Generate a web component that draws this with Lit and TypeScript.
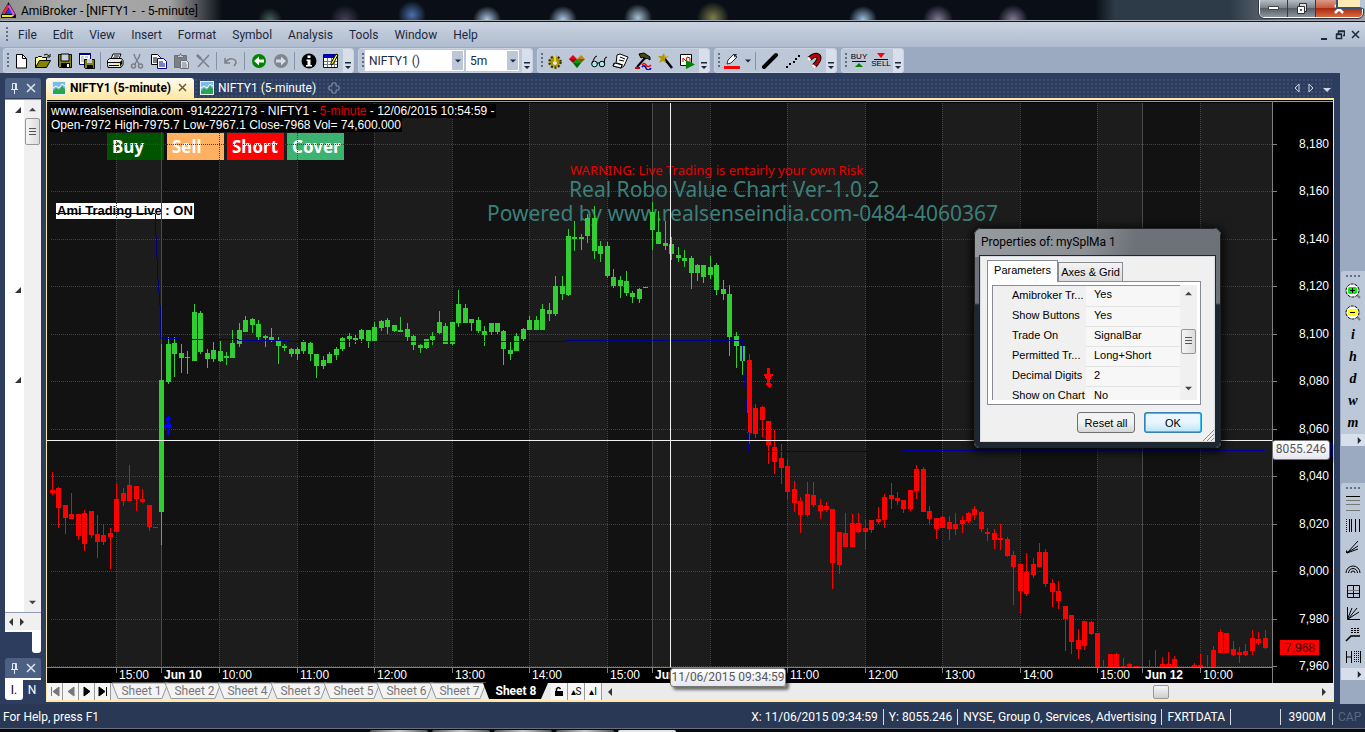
import { LitElement, html, svg, css } from "lit";
import { customElement } from "lit/decorators.js";

type Bar = [number, number, number, number];

/* Each bar: wick top, body top, body bottom, wick bottom. */
const BARS: Bar[] = [
  [472,490,493,495],[487,488,508,528],[505,505,518,534],[493,514,519,519],[514,514,536,540],[510,513,544,551],[511,511,535,538],
  [515,534,542,558],[524,535,542,545],[528,533,537,569],[483,499,532,532],[488,493,501,506],[465,485,501,501],[486,486,499,511],
  [489,499,502,503],[505,505,527,531],[527,527,528,528],[344,380,512,545],[337,344,382,384],[337,343,354,377],[344,353,358,373],
  [351,357,358,374],[304,312,361,361],[311,313,352,354],[349,353,359,368],[342,350,359,362],[341,351,361,362],[352,356,358,365],
  [330,343,358,358],[323,330,344,347],[316,320,332,332],[318,319,325,333],[320,324,337,340],[335,336,338,347],[328,337,340,342],
  [337,341,346,364],[344,346,348,351],[348,349,354,357],[347,349,354,360],[340,342,351,354],[342,343,354,361],[354,354,366,378],
  [356,360,366,369],[352,354,363,363],[347,349,355,360],[337,338,349,351],[333,336,339,347],[335,338,340,344],[329,330,339,343],
  [330,330,341,348],[322,327,341,341],[320,321,328,331],[318,320,327,334],[325,325,331,332],[317,330,332,332],[323,329,337,341],
  [335,336,345,350],[344,345,348,353],[339,339,348,349],[332,336,340,345],[311,322,333,334],[323,326,344,344],[322,322,344,345],
  [290,304,323,327],[304,308,323,323],[319,319,323,331],[317,320,331,333],[326,331,335,346],[323,323,332,335],[323,323,332,334],
  [330,331,349,365],[342,350,354,360],[333,336,351,351],[328,329,339,341],[316,320,330,330],[316,320,330,330],[304,309,330,330],
  [303,310,314,321],[276,286,314,316],[276,286,294,300],[229,236,295,296],[221,237,239,251],[234,237,239,250],[214,218,236,243],
  [206,218,251,259],[241,246,254,262],[242,246,276,278],[269,277,286,288],[276,280,286,298],[271,281,293,296],[291,293,297,303],
  [288,289,299,303],[287,287,288,288],[202,212,230,250],[211,232,244,244],[221,243,246,250],[237,244,254,260],[247,255,258,262],
  [250,258,261,267],[256,258,273,289],[264,265,273,281],[265,265,277,283],[256,267,275,279],[263,265,290,295],[280,289,294,300],
  [285,294,337,356],[332,336,346,368],[346,346,361,375],[354,360,433,444],[404,408,434,438],[406,407,420,437],[421,421,445,464],
  [430,447,462,474],[444,458,468,484],[459,466,492,500],[481,489,503,512],[497,501,515,533],[482,494,515,517],[482,495,505,507],
  [499,505,511,519],[502,506,510,512],[509,509,563,589],[532,532,565,574],[513,533,547,547],[514,523,547,547],[513,523,532,533],
  [520,528,532,550],[520,520,530,533],[507,519,522,524],[494,497,520,528],[483,495,499,509],[492,498,501,505],[500,500,509,513],
  [490,490,509,511],[465,469,491,499],[467,469,512,512],[506,511,519,524],[518,518,529,539],[516,517,528,528],[516,522,529,540],
  [513,524,529,535],[516,520,524,533],[512,513,521,523],[506,509,515,520],[511,512,529,532],[528,532,534,541],[529,533,540,549],
  [524,538,540,550],[537,539,556,557],[551,555,567,605],[564,564,591,614],[553,572,594,596],[558,564,575,578],[543,552,567,567],
  [549,552,584,587],[579,583,592,607],[581,591,601,609],[606,606,619,651],[615,615,642,654],[629,640,649,659],[621,621,646,650],
  [621,622,634,635],[633,633,667,667],[660,667,667,667],[654,654,667,667],[653,654,667,667],[658,666,667,667],[663,664,667,667],
  [666,666,667,667],[667,667,667,667],[660,667,667,667],[650,667,667,667],[657,664,667,667],[652,664,667,667],[656,659,667,667],
  [667,667,667,667],[667,667,667,667],[663,665,667,667],[654,665,667,667],[655,667,667,667],[646,650,667,667],[629,632,653,653],
  [633,633,653,653],[641,649,655,656],[647,652,655,663],[644,651,655,656],[630,638,651,655],[632,639,643,645],[630,638,648,649],
];
const FIRST_X = 52.3;
const STEP = 6.452;
const GREEN_FROM = 17;
const GREEN_TO = 107;

const PRICES: [string, number][] = [
  ["8,180",144],["8,160",191],["8,140",239],["8,120",286],["8,100",334],["8,080",381],
  ["8,060",429],["8,040",476],["8,020",524],["8,000",571],["7,980",619],["7,960",666],
];
const TIMES: [string, number, boolean][] = [
  ["15:00",116,false],["Jun 10",161,true],["10:00",219,false],["11:00",297,false],["12:00",374,false],["13:00",452,false],
  ["14:00",529,false],["15:00",607,false],["Jun 11",652,true],["10:00",710,false],["11:00",787,false],["12:00",865,false],
  ["13:00",942,false],["14:00",1020,false],["15:00",1097,false],["Jun 12",1142,true],["10:00",1200,false],
];

const icon = (body: unknown, cls = "ic") =>
  html`<svg class=${cls} viewBox="0 0 18 18" aria-hidden="true">${body}</svg>`;

const I = {
  page: svg`<path d="M4.500 2.500h6l4 4v9.500h-10z" fill="#fff" stroke="#000"/><path d="M10.500 2.500v4h4" fill="none" stroke="#000"/>`,
  open: svg`<path d="M1.500 15.500V5.500h2l1-1h3l1 1h4v3" fill="#ffff9c" stroke="#000"/><path d="M1.500 15.500l4-7h11l-4 7z" fill="#848400" stroke="#000"/><path d="M10 3q3-2 5 1m1-2v3h-3" fill="none" stroke="#000"/>`,
  save: svg`<path d="M2.500 2.500h13v13h-12l-1-1z" fill="#848400" stroke="#000"/><path d="M5 2h8v7H5z" fill="#c6cedd" stroke="#000"/><path d="M5 11h9v5H5z"/><path d="M11 12h2v3h-2z" fill="#fff"/>`,
  saveAll: svg`<path d="M1.500 1.500h11v11h-11z" fill="#fff" stroke="#000084"/><path d="M1 1h12v2H1z" fill="#000084"/><path d="M3 5h3m1 0h3M3 7h3m-3 2h3" stroke="#8c9ab0"/><path d="M6.500 7.500h10v9h-9l-1-1z" fill="#848400" stroke="#000"/><path d="M9 7h5v4H9z" fill="#c6cedd"/><path d="M9 13h6v4H9z"/>`,
  print: svg`<path d="M5 7l2-5h8l-2 5" fill="#fff" stroke="#000"/><path d="M8 4h5m-6 2h5" stroke="#000"/><path d="M1.500 8.500l2-2h12l1.500 2v4l-2 3h-13l-.5-3z" fill="#e8e8e8" stroke="#000"/><path d="M2 10.500h12M3 13.500h10" stroke="#000"/><path d="M14 10l2-2v4l-2 3z"/><path d="M10 12h3" stroke="#ff0"/>`,
  cut: svg`<path d="M6 2l1 3 4 7M12 2l-1 3-4 7" fill="none" stroke="#7b7f87" stroke-width="1.500"/><circle cx="5.500" cy="14" r="2" fill="none" stroke="#7b7f87" stroke-width="1.500"/><circle cx="12.500" cy="14" r="2" fill="none" stroke="#7b7f87" stroke-width="1.500"/>`,
  copy: svg`<path d="M1.500 2.500h6l3 3v7h-9z" fill="#fff" stroke="#000"/><path d="M3 6h4M3 8h5m-5 2h5" stroke="#000"/><path d="M7.500 6.500h6l3 3v7h-9z" fill="#fff" stroke="#000084"/><path d="M9 10h4m-4 2h6m-6 2h6" stroke="#000084"/>`,
  paste: svg`<path d="M2.500 3.500h12v12h-12z" fill="#7b7f87" stroke="#6c7078"/><path d="M5.500 5.500v-2h2l1-2 1 2h2v2z" fill="#c6cedd" stroke="#6c7078"/><path d="M8.500 8.500h6l2 2v6h-8z" fill="#dfe4ee" stroke="#6c7078"/><path d="M10 11h4m-4 2h5m-5 2h5" stroke="#7b7f87"/>`,
  del: svg`<path d="M3 3l12 12M15 3L4 15" stroke="#7b7f87" stroke-width="1.500"/><path d="M3 3l4 4" stroke="#7b7f87" stroke-width="2.500"/>`,
  undo: svg`<path d="M3 6v5h5M3 11c4-6 11-5 11 0l-2 3" fill="none" stroke="#7b7f87" stroke-width="1.500"/>`,
  back: svg`<circle cx="9" cy="9" r="7" fill="#008400"/><path d="M4 9l5-4.500v3h5v3H9v3z" fill="#fff"/>`,
  fwd: svg`<circle cx="9" cy="9" r="7" fill="#80858e"/><path d="M14 9L9 4.500v3H4v3h5v3z" fill="#d5dce8"/>`,
  info: svg`<circle cx="9" cy="9" r="7.500"/><path d="M7.500 3.500h3v2.500h-3zM6.500 7.500h4V13h1.500v1.500H6V13h1.500V9h-1z" fill="#fff"/>`,
  table: svg`<path d="M1.500 2.500h14v13h-14z" fill="#fff" stroke="#000084"/><path d="M2 3h13v3H2z" fill="#00c"/><path d="M2 9.500h13M2 12.500h13M5.500 6v9m4-9v9m3-9v9" stroke="#777"/><path d="M9 11l5-9 2 1-5 9-2 1z" fill="#ff0" stroke="#000"/>`,
  gear: svg`<circle cx="9" cy="10" r="5.500" fill="#c8b400" stroke="#3a3000" stroke-dasharray="2 1.500" stroke-width="2.500"/><circle cx="9" cy="10" r="4.500" fill="#a89400"/><circle cx="9" cy="11" r="2" fill="#e8e8f0"/><path d="M8 3h2v7H8z" fill="#e8d830"/>`,
  gems: svg`<path d="M1 7l4-4 4 4-4 4z" fill="#e8001c"/><path d="M9 7l4-4 4 4-4 4z" fill="#bd8a10"/><path d="M5 11l4-4 4 4-4 5z" fill="#00a000"/><path d="M1 7h8l-4 4zM9 7h8l-4 4zM5 11h8l-4 5z" opacity=".35"/>`,
  glasses: svg`<circle cx="4.500" cy="12" r="2.800" fill="#a8f0f0" stroke="#000"/><circle cx="12" cy="12" r="2.800" fill="#a8f0f0" stroke="#000"/><path d="M7 11h2M2 11l3-6 2-1m7 7l1-5 2-1" fill="none" stroke="#000"/>`,
  scroll: svg`<path d="M5 3l3-1 8 3-4 9-3 2-8-2 1-3 2 1z" fill="#fff" stroke="#000"/><path d="M8 5l5 2M7 8l5 1M5 11l6 2" stroke="#000"/><path d="M1 14l8 2 1-3-7-2z" fill="#fff" stroke="#000"/>`,
  pick: svg`<path d="M5 2l5-1 6 4v3l-3-2-2 1-2-2-2 1-1-2z" fill="#4a4a10" stroke="#000"/><path d="M11 6L3 15" stroke="#000" stroke-width="2"/><path d="M1 16h5" stroke="#c00" stroke-width="2"/><path d="M8 13q2-3 4 0t5 0" stroke="#e00" fill="none" stroke-width="1.500"/><path d="M8 15q2-3 4 1t5 0" stroke="#00c" fill="none" stroke-width="1.500"/>`,
  wand: svg`<path d="M8 6l8 10" stroke="#000" stroke-width="2.500"/><path d="M2 4l4 0 2-3 1 4 4-1-4 3 1 4-3-2-4 2 2-4z" fill="#b09a00"/>`,
  play: svg`<path d="M2.500 2.500h11v11h-11z" fill="#fff" stroke="#000"/><path d="M5 10V6l3 3 1-4 3 1v4" fill="none" stroke="#d00"/><path d="M8 8l9 4.500L8 17z" fill="#008400"/>`,
  pen: svg`<path d="M4 12l1-4 6-6 3 3-6 6-4 1z" fill="#fff" stroke="#24304a"/><path d="M10 2l4 0-2 4z" fill="#24304a"/><path d="M1 14h16v3H1z" fill="red"/>`,
  line: svg`<path d="M3 15L15 3" stroke="#000" stroke-width="4" stroke-linecap="round"/>`,
  dots: svg`<path d="M3 15h2m1-3h2m2-2h2m0-3h2m1-3h2" stroke="#000" stroke-width="2"/>`,
  magnet: svg`<path d="M4 7l4-3q6-2 6 2 0 3-5 8" fill="none" stroke="#000" stroke-width="5"/><path d="M4 7l4-3q6-2 6 2 0 3-5 8" fill="none" stroke="#c00000" stroke-width="3"/><path d="M3 5.500l2.500 3M7.500 13l3 2.500" stroke="#fff" stroke-width="2"/>`,
};

const R = {
  plus: svg`<circle cx="8.500" cy="8.500" r="6.500" fill="#fff" stroke="#000" stroke-dasharray="3 1"/><rect x="4" y="5" width="9" height="7" rx="2" fill="#0e0"/><path d="M8.500 6v5M6 8.500h5" stroke="#000"/><path d="M13 13l3 3" stroke="#777" stroke-width="2"/>`,
  minus: svg`<circle cx="8.500" cy="8.500" r="6.500" fill="#fff" stroke="#000" stroke-dasharray="3 1"/><rect x="4" y="5" width="9" height="7" rx="2" fill="#ff0"/><path d="M6 8.500h5" stroke="#000"/><path d="M13 13l3 3" stroke="#777" stroke-width="2"/>`,
  hlines: svg`<path d="M2 2.500h14" stroke="#000"/><path d="M2 6.500h14M2 10.500h14M2 16.500h14" stroke="#777"/>`,
  vlines: svg`<path d="M2.500 3v13" stroke="#000" stroke-dasharray="1 1"/><path d="M5.500 3v13m2-13v13m4-13v13m4-13v13" stroke="#000"/>`,
  fan: svg`<path d="M3 15L14 3M3 15l11-7M3 15l11-4" stroke="#000" fill="none"/><path d="M2 12l3 3H2z"/>`,
  arcs: svg`<path d="M2 13a7 7 0 0 1 14 0M4.500 13a4.500 4.500 0 0 1 9 0M7 13a2 2 0 0 1 4 0" fill="none" stroke="#000"/>`,
  grid: svg`<path d="M3.500 3.500h12v12h-12zM9.500 4v11M4 11.500h11" fill="none" stroke="#000"/><path d="M4 8.500h11" stroke="#777"/>`,
  gann: svg`<path d="M3.500 3v12.500H16M3.500 15L8 4m-4 11L13 4M4 15l11-7" fill="none" stroke="#000"/>`,
  trend: svg`<path d="M2 15l5-5h9" fill="none" stroke="#000" stroke-width="1.500"/><path d="M7 2.500h9m-9 2h9m-9 2h9" stroke="#000" stroke-dasharray="2 1"/>`,
  fib: svg`<path d="M2.500 3v12m5-12v12M2 9h6m8.500-6v12" stroke="#000"/><path d="M10.500 3v12m2-12v12m2-12v12" stroke="#000" stroke-dasharray="1 1"/>`,
};

@customElement("app-root")
export class AppRoot extends LitElement {
  static styles = css`
    :host { display: block; --ui: Roboto, "Open Sans", sans-serif; font: 12px/16px var(--ui); color: #1b293e; }
    * { box-sizing: border-box; }
    button { font: inherit; color: inherit; background: none; border: 0; padding: 0; margin: 0; }
    svg { display: block; }
    .window { display: flex; flex-direction: column; height: 100vh; min-height: 600px; background: #2d3d5d; overflow: hidden; position: relative; }

    .title { height: 22px; flex: none; display: flex; align-items: flex-start; gap: 5px; padding-left: 1px; color: #000;
      border-bottom: 1px solid #10151f; box-shadow: inset 0 -1px #a8adb4; background:
      radial-gradient(circle at 270px 20px, #5c7d6bc0, transparent 12px), radial-gradient(circle at 345px 20px, #6a5f86a0, transparent 15px),
      radial-gradient(circle at 412px 15px, #5a86d0d0, transparent 14px), radial-gradient(circle at 487px 20px, #aecbea, transparent 14px),
      radial-gradient(circle at 563px 20px, #aecbea, transparent 14px), radial-gradient(circle at 638px 18px, #a6c4d6, transparent 14px),
      radial-gradient(circle at 713px 18px, #7d7f48, transparent 16px), radial-gradient(circle at 863px 20px, #9cc4e6, transparent 14px),
      radial-gradient(circle at 938px 20px, #857a9a, transparent 15px), radial-gradient(circle at 1013px 20px, #857a9a, transparent 15px),
      linear-gradient(90deg, #8f8f8f 0, #a9a9a9 60px, #a2a2a2 170px, #0a0f17 222px, #0a0f17 1095px, #2d3b49 1115px, #2d3b49 1230px, #6b737b 1280px, #98a0a8); }
    .title .text { padding-top: 3px; flex: 1; white-space: pre; }
    .logo { width: 15px; height: 18px; margin-top: 2px; }
    .caps { display: flex; height: 18px; border: 1px solid #fff; border-top: 0; border-radius: 0 0 5px 5px; outline: 1px solid #30363e; overflow: hidden; margin-right: 2px; }
    .caps button { width: 28px; border-right: 1px solid #333b44; background: linear-gradient(#b6bdc4, #767d85 50%, #565e68 50%, #8d959e); display: grid; place-items: center; }
    .caps button:last-child { width: 46px; border: 0; background: linear-gradient(#d99a86, #c4553a 50%, #ac2a0c 50%, #d56a44); }
    .corner { position: absolute; right: 0; top: 0; width: 29px; height: 9px; background: #fdebb5; border: 2px solid #3b5078; border-top: 0; border-right: 5px solid #b9c5d8; }

    .menu { height: 25px; flex: none; display: flex; align-items: center; gap: 16px; padding: 0 4px 0 6px; background: linear-gradient(#cad3e0, #afbbcf); }
    .grip { width: 2px; height: 16px; background: repeating-linear-gradient(#5f6f8a 0 2px, transparent 2px 4px); flex: none; }
    .menu .grip { margin-right: -6px; }
    .menu .mdi { margin-left: auto; display: flex; gap: 6px; }

    .bars { height: 26px; flex: none; display: flex; gap: 4px; padding: 1px 0 0 3px; background: #9ba9c1; }
    .bar { display: flex; align-items: center; height: 25px; background: #bcc7d8; border: 1px solid #c9d2e0; border-radius: 3px; padding-left: 3px; }
    .bar .grip { margin-right: 1px; }
    .bar button { width: 22px; height: 22px; display: grid; place-items: center; }
    .bar .more { width: 10px; height: 24px; background: #d9dfea; border-radius: 0 3px 3px 0; align-items: end; padding-bottom: 3px; margin-left: 1px; }
    .sep { width: 1px; height: 18px; background: #8592a8; margin: 0 3px 0 2px; }
    .ic { width: 18px; height: 18px; }
    .combo { position: relative; height: 21px; background: #fff; margin-right: 2px; display: flex; }
    .combo select { appearance: none; border: 1px solid #fff; background: #fff; font: 12px/16px var(--ui); color: #1b293e; padding: 0 0 0 3px; width: 100%; border-radius: 0; }
    .combo i { position: absolute; right: 1px; top: 1px; bottom: 1px; width: 11px; background: #bcc7d8; pointer-events: none; display: grid; place-items: center; }
    .wide { width: 99px; } .narrow { width: 53px; }
    .bar .drop { width: 10px; }
    .bar .trade { width: 22px; height: 22px; font-family: "Liberation Sans", sans-serif; font-size: 8px; line-height: 8px; color: #000; align-content: center; }

    .work { flex: 1; min-height: 0; display: flex; }
    .side { width: 46px; flex: none; padding: 5px 5px 4px; display: flex; flex-direction: column; }
    .phead { height: 20px; display: flex; align-items: center; justify-content: space-around; background: #4b6082; border-radius: 3px 3px 0 0; flex: none; padding-right: 2px; }
    .tree { flex: 1; display: flex; background: #fff; border: 1px solid #8e9bb3; border-width: 1px 0; margin-top: 1px; position: relative; min-height: 0; }
    .nodes { width: 19px; display: flex; flex-direction: column; align-items: flex-end; padding: 7px 3px; color: #333; }
    .nodes svg:nth-child(2) { margin-top: 174px; } .nodes svg:nth-child(3) { margin-top: 84px; }
    .vscroll { flex: 1; background: #f0f0f0; display: flex; flex-direction: column; align-items: center; padding: 6px 0; }
    .thumb { border: 1px solid #979797; border-radius: 2px; background: linear-gradient(90deg, #f5f5f5, #dcdcdc); display: grid; place-items: center; }
    .thumb::after { content: ""; width: 7px; height: 8px; background: repeating-linear-gradient(#555 0 1px, transparent 1px 3px); }
    .vscroll .thumb { width: 15px; height: 27px; margin: 5px 0 auto; }
    .hscroll { height: 19px; background: #f0f0f0; border-bottom: 2px solid #fff; display: flex; align-items: center; gap: 2px; padding-left: 3px; flex: none; }
    .stub { width: 9px; height: 21px; background: #fff; margin-left: auto; border-radius: 0 0 3px 3px; flex: none; }
    .panel2 { margin-top: 5px; flex: none; }
    .ptabs { display: flex; border-top: 2px solid #fff; height: 22px; }
    .ptabs button { width: 18px; height: 20px; color: #fff; overflow: hidden; }
    .ptabs .on { background: #fff; color: #000; border-radius: 0 0 3px 3px; }

    .doc { flex: 1; min-width: 0; padding: 5px 0 2px; display: flex; flex-direction: column; }
    .tabs { height: 20px; flex: none; display: flex; color: #fff; align-items: stretch; margin-right: 2px;
      background: radial-gradient(#3b4d70 1px, transparent 1px) 0 0 / 4px 4px; }
    .tab { display: flex; align-items: center; gap: 4px; padding: 0 6px; border-radius: 3px 3px 0 0; white-space: nowrap; }
    .tab.on { background: linear-gradient(#fffbf0, #ffe8a6); color: #000; font-weight: 700; width: 148px; }
    .tab.on span { flex: 1; text-align: left; }
    .tabs .arrows { margin-left: auto; display: flex; align-items: center; gap: 8px; }
    .frame { flex: 1; min-height: 0; border: 1px solid #ffe8a6; border-width: 2px 1px 2px 1px; display: flex; flex-direction: column; background: #000; }
    .chart { flex: 1; min-height: 0; position: relative; }
    .chart > svg { position: absolute; inset: 0; width: 100%; height: 100%; pointer-events: none; }
    .axis { font: 12px "Liberation Sans", sans-serif; fill: #fff; }
    .axis.day { font-weight: 700; }
    .axis.last { fill: #300; }
    .mark { font-family: "Noto Sans", sans-serif; }
    .legend { position: absolute; left: 3px; top: 4px; color: #fff; font: 12px/14px "Liberation Sans", sans-serif; white-space: pre; z-index: 1; }
    .legend p { margin: 0; background: #000; width: max-content; padding: 0 1px; }
    .legend b { color: #e00000; font-weight: 400; }
    .orders { position: absolute; left: 60px; top: 33px; display: flex; gap: 3px; }
    .orders button { width: 57px; height: 27px; color: #fff; font: 700 17px/25px "Noto Sans", sans-serif; text-align: left; padding-left: 5px; }
    .buy { background: #005400; } .sell { background: #ffb060; } .short { background: #f00; } .cover { background: #3cb371; }
    .live { position: absolute; left: 9px; top: 103px; background: #fff; color: #000; font: 700 13px/16px "Liberation Sans", sans-serif; padding: 0 1px; }
    .tip { position: absolute; background: linear-gradient(#fff, #e6e6f0); border: 1px solid #767676; border-radius: 3px; color: #575757; box-shadow: 3px 3px 3px #0008; font-size: 12px; text-align: center; z-index: 2; white-space: nowrap; }
    .tip.price { left: 1225px; top: 340px; width: 58px; height: 20px; line-height: 17px; }
    .tip.time { left: 623px; top: 568px; width: 116px; height: 19px; line-height: 17px; }

    .sheets { height: 17px; flex: none; display: flex; background: #ebebeb; color: #777; line-height: 15px; }
    .nav { width: 16px; background: #f5f5f5; border-right: 1px solid #999; display: grid; place-items: center; }
    .sheets button { height: 17px; }
    .sheet { width: 53px; position: relative; padding-left: 8px; white-space: nowrap; }
    .sheet svg, .cur svg { position: absolute; left: 0; top: 0; overflow: visible; }
    .sheet span, .cur span { position: relative; }
    .cur { width: 64px; position: relative; color: #fff; font-weight: 700; margin-left: 2px; margin-right: 3px; }
    .sheets .lock { width: 17px; border-right: 1px solid #999; background: #f7f7f7; color: #000; font-size: 10px; }
    .sheets .track { flex: 1; display: flex; align-items: center; padding: 0 5px; justify-content: space-between; }
    .hthumb { width: 16px; height: 14px; border: 1px solid #979797; border-radius: 2px; background: linear-gradient(#f5f5f5, #cfcfcf); margin: 1px 0 0 auto; }
    .track .end { margin-left: 151px; }

    .dock { width: 25px; flex: none; margin-left: 6px; background: #9ba9c1; padding: 198px 0 0 1px; }
    .vbar { background: #bcc7d8; border-radius: 3px 0 0 3px; display: flex; flex-direction: column; align-items: center; padding-top: 4px; }
    .vbar + .vbar { margin-top: 37px; }
    .hgrip { width: 14px; height: 2px; background: repeating-linear-gradient(90deg, #5f6f8a 0 2px, transparent 2px 4px); margin-bottom: 3px; }
    .vbar button { width: 22px; height: 22px; display: grid; place-items: center; font: italic 700 14px/20px "Liberation Serif", serif; color: #000; }
    .vbar .tail { width: 100%; height: 12px; background: #d9dfea; justify-items: end; padding-right: 2px; }

    .status { height: 24px; flex: none; display: flex; align-items: center; background: #293955; color: #fff; padding: 4px 4px 2px 3px; white-space: nowrap; }
    .status span { border-right: 1px solid #d5dae4; height: 16px; line-height: 16px; padding: 0 5px; }
    .status span:first-child { flex: 1; border: 0; padding: 0; }
    .status .blank { width: 50px; }
    .status .mem { width: 52px; text-align: right; padding-right: 6px; }
    .status .caps-key { border: 0; color: #5b6880; width: 28px; }
    .task { height: 4px; flex: none; background: #05080d; border-top: 1px solid #69707c; display: flex; gap: 4px; padding: 1px 0 0 370px; }
    .task i { width: 58px; background: linear-gradient(90deg, #555, #ccc, #555); border-radius: 2px 2px 0 0; }
    .task i:last-child { background: #e5e5e5; }

    .dialog { position: absolute; left: 974px; top: 228px; width: 247px; height: 220px; border: 1px solid #d8dce0; border-radius: 7px 7px 5px 5px; outline: 1px solid #222; outline-offset: -1px; z-index: 5; padding: 0 5px 5px; color: #000; box-shadow: 0 2px 9px 3px #000b;
      background: linear-gradient(100deg, #9ba0a5e0 0, #a5a9ad90 45%, #62676d00 65%) 0 0 / 100% 28px no-repeat, linear-gradient(#6d7278 0 74px, #1d2731 76px); display: flex; flex-direction: column; }
    .dialog h2 { margin: 0; font: 12px/26px var(--ui); height: 27px; padding-left: 1px; }
    .inner { flex: 1; border: 1px solid #d8dce0; outline: 1px solid #20262c; background: #f0f0f0; padding: 3px 13px 4px 6px; font: 11px/14px "Liberation Sans", sans-serif; position: relative; }
    .dtabs { display: flex; align-items: flex-end; height: 21px; }
    .dtabs button { border: 1px solid #898c95; height: 19px; width: 65px; background: linear-gradient(#f3f3f3, #dcdcdc); border-bottom: 0; white-space: nowrap; }
    .dtabs .on { height: 22px; width: 71px; background: #fff; margin-bottom: -1px; position: relative; z-index: 1; padding-bottom: 3px; }
    .pane { background: #fff; border: 1px solid #898c95; height: 124px; padding: 3px 3px 4px 4px; display: flex; }
    .rows { flex: 1; overflow: hidden; border: 1px solid #898c95; border-width: 1px 0 0 1px; background: #f0f0f0; }
    .rows table { border-collapse: collapse; width: 100%; table-layout: fixed; }
    .rows th { font-weight: 400; text-align: left; width: 93px; padding: 0 0 2px 19px; white-space: nowrap; height: 20px; line-height: 17px; }
    .rows td { background: #f7f7f7; border-bottom: 1px solid #e3e3e3; padding: 0 0 2px 8px; line-height: 17px; }
    .pane .vscroll { flex: none; width: 17px; padding: 5px 0 8px; }
    .pane .vscroll .thumb { height: 25px; margin: auto 0; }
    .acts { display: flex; justify-content: flex-end; gap: 9px; padding-top: 7px; margin-right: -1px; }
    .acts button { width: 58px; height: 21px; border: 1px solid #707070; border-radius: 3px; background: linear-gradient(#f2f2f2 50%, #d6d6d6); }
    .acts .ok { border: 2px solid #2cc4f3; background: linear-gradient(#eaf6fd 50%, #bee6f7); outline: 1px solid #3c7fb1; outline-offset: -1px; }
    .size { position: absolute; right: 0; bottom: 0; width: 11px; height: 11px; }
  `;

  private tri(dir: "l" | "r" | "u" | "d", fill = "#1b293e", size = 5) {
    const d = { l: "M5 0v8L1 4z", r: "M2 0v8l4-4z", u: "M0 6h8L4 2z", d: "M0 2h8L4 6z" }[dir];
    return html`<svg width=${size} height=${size} viewBox="0 0 8 8" aria-hidden="true"><path d=${d} fill=${fill} /></svg>`;
  }
  private btn(label: string, body: unknown) {
    return html`<button aria-label=${label} title=${label}>${icon(body)}</button>`;
  }
  private more() {
    return html`<button class="more" aria-label="Toolbar options"><svg width="8" height="8" viewBox="0 0 8 8"><path d="M1 0h6v1.500H1zM1 4h6L4 7z" fill="#1b293e" /></svg></button>`;
  }
  private pin() {
    return html`<svg width="12" height="14" viewBox="0 0 12 14"><path d="M4.500 2.500h4v6h-4zM3 8.500h7M6.500 9v4M7.500 3v5" fill="none" stroke="#dfe5ef" /></svg>
      <svg width="10" height="10" viewBox="0 0 10 10"><path d="M1 1l8 8M9 1L1 9" stroke="#dfe5ef" stroke-width="1.500" /></svg>`;
  }
  private tabIcon() {
    return html`<svg width="14" height="14" viewBox="0 0 14 14"><path d="M0 0h14v14H0z" fill="#e4f2fb" /><path d="M1 1h12v9H1z" fill="#7bbbe8" /><path d="M1 10l3-3 3 2 3-4 3 3v5H1z" fill="#2fa34a" /><path d="M1 7l3-2 3 2 3-4 3 2" fill="none" stroke="#fff" /></svg>`;
  }

  private bands() {
    const edges = [47, ...TIMES.map((t) => t[1]), 1272];
    return svg`${edges.slice(0, -1).map((x, i) => svg`<rect x=${x} y="103" width=${edges[i + 1] - x} height="564" fill=${i % 2 ? "#1c1c1c" : "#121212"}/>`)}`;
  }

  private bars() {
    return BARS.map(([hi, top, bot, lo], i) => {
      const x = Math.floor(FIRST_X + i * STEP);
      const c = i >= GREEN_FROM && i <= GREEN_TO ? "#32cd32" : "#ff0000";
      if (hi >= 667) return null;
      return svg`<rect x=${x} y=${hi} width="1" height=${Math.max(1, lo - hi)} fill=${c}/><rect x=${x - 2} y=${top} width="5" height=${top >= 667 ? 0 : Math.max(1, bot - top)} fill=${c}/>`;
    });
  }

  private plot() {
    return svg`
      <path d="M47 101.500H1333" stroke="#9a9a9a"/>
      ${PRICES.map(([, y]) => svg`<path d=${`M51 ${y + 0.5}H1272`} stroke="#444" stroke-dasharray="1 1"/>`)}
      ${TIMES.map(([, x, day]) => svg`<path d=${`M${x + 0.5} 103V667`} stroke=${day ? "#4a4a4a" : "#444"} stroke-dasharray=${day ? "none" : "1 1"}/>`)}
      <g class="mark">
        <text x="570" y="175" font-size="13" fill="#e60000">WARNING: Live Trading is entairly your own Risk</text>
        <text x="569" y="197" font-size="21" fill="#3d7f7a">Real Robo Value Chart Ver-1.0.2</text>
        <text x="487" y="221" font-size="21" fill="#3d7f7a">Powered by www.realsenseindia.com-0484-4060367</text>
      </g>
      <path d="M51 213.500H155L158 280l2 25 1 33" fill="none" stroke="#00007c"/>
      ${this.bars()}
      <path d="M161 338.500H178v1h60v1h50v1H565v-1H742v7l5 65 2 39H901" fill="none" stroke="#000090"/>
      <path d="M901 450.500H1265" stroke="#0000a0"/>
      <path d="M168 416l3 3h-1v2h-1v1l3 4v2h-2v7h-3v-7h-3v-2l3-4v-1h-1v-2h-1z" fill="#00f"/>
      <path d="M767 368h3v6h3v1l-3 5v2l2 3-3 3-3-3 1-3v-2l-3-5v-1h3z" fill="#f00"/>
      <path d="M1272.500 101V683M47 667.500H1333" stroke="#808080"/>
      <path d="M1273 667h60v2h-60z"/>
      ${PRICES.map(([t, y]) => svg`<path d=${`M1272 ${y + 0.5}h5`} stroke="#808080"/><text class="axis" x="1329" y=${y + 4} text-anchor="end">${t}</text>`)}
      ${TIMES.map(([t, x, day]) => svg`<path d=${`M${x + 0.5} 667v6`} stroke="#808080"/><text class=${day ? "axis day" : "axis"} x=${x + 3} y="679">${t}</text>`)}
      <rect x="1280" y="640" width="39" height="15" fill="#f00"/><text class="axis last" x="1315" y="652" text-anchor="end">7,968</text>
      <rect x="1325" y="443" width="8" height="14" fill="#000080"/>
      <path d="M47 440.500H1272M670.500 103V667" stroke="#f0f0f0"/>`;
  }

  render() {
    const vb = "47 100 1286 583";
    return html`
      <div class="window">
        <header class="title">
          <svg class="logo" viewBox="0 0 15 18"><path d="M7.500 0L0 13v3h15v-3z" fill="#111" /><path d="M6.500 2L1 12h3l4-7z" fill="#f02040" /><path d="M8 2l6 10-2 2-5-9z" fill="#e050d0" /><path d="M1 13h12l-2 2H1z" fill="#f0e020" /><path d="M5 12l3-6 3 6z" fill="#2040e0" /></svg>
          <span class="text">AmiBroker - [NIFTY1 -  - 5-minute]</span>
          <div class="caps">
            <button aria-label="Minimize"><svg width="12" height="5"><path d="M.5 .5h10v3H.5z" fill="#fff" stroke="#444" /></svg></button>
            <button aria-label="Restore"><svg width="12" height="12"><path d="M3.500 .5h7v8h-7z" fill="#ddd" stroke="#333" /><path d="M1.500 3.500h7v7h-7z" fill="#fff" stroke="#333" /><path d="M4 6h2v2H4z" fill="#555" /></svg></button>
            <button aria-label="Close"><svg width="12" height="11"><path d="M2 2l8 8M10 2L2 10" stroke="#fff" stroke-width="2.500" /></svg></button>
          </div>
          <i class="corner"></i>
        </header>
        <nav class="menu">
          <i class="grip"></i>
          ${["File", "Edit", "View", "Insert", "Format", "Symbol", "Analysis", "Tools", "Window", "Help"].map((m) => html`<button>${m}</button>`)}
          <div class="mdi">
            <svg width="10" height="12"><path d="M2 9h6v2H2z" fill="#1b293e" /></svg>
            <svg width="10" height="12"><path d="M3.500 5V2.500h6v4H8M1.500 5.500h5v4h-5zM3 2h7M1 5h6" fill="none" stroke="#1b293e" stroke-width="1.500" /></svg>
            <svg width="10" height="12"><path d="M1 2l7 7M8 2L1 9" stroke="#1b293e" stroke-width="1.500" /></svg>
          </div>
        </nav>
        <div class="bars">
          <div class="bar"><i class="grip"></i>
            ${this.btn("New", I.page)}${this.btn("Open", I.open)}${this.btn("Save", I.save)}${this.btn("Save all", I.saveAll)}<i class="sep"></i>
            ${this.btn("Print", I.print)}${this.btn("Cut", I.cut)}${this.btn("Copy", I.copy)}${this.btn("Paste", I.paste)}${this.btn("Delete", I.del)}<i class="sep"></i>
            ${this.btn("Undo", I.undo)}<i class="sep"></i>
            ${this.btn("Back", I.back)}${this.btn("Forward", I.fwd)}<i class="sep"></i>
            ${this.btn("Information", I.info)}${this.btn("Quotes", I.table)}${this.more()}
          </div>
          <div class="bar"><i class="grip"></i>
            <label class="combo wide"><select aria-label="Symbol"><option>NIFTY1 ()</option></select><i>${this.tri("d", "#1b293e", 6)}</i></label>
            <label class="combo narrow"><select aria-label="Interval"><option>5m</option></select><i>${this.tri("d", "#1b293e", 6)}</i></label>
            ${this.more()}
          </div>
          <div class="bar"><i class="grip"></i>
            ${this.btn("Settings", I.gear)}${this.btn("Layers", I.gems)}${this.btn("Scan", I.glasses)}${this.btn("Report", I.scroll)}${this.btn("Explore", I.pick)}${this.btn("Wizard", I.wand)}${this.btn("Apply", I.play)}${this.more()}
          </div>
          <div class="bar"><i class="grip"></i>
            ${this.btn("Line color", I.pen)}<button class="drop" aria-label="Colors">${this.tri("d", "#1b293e", 6)}</button><i class="sep"></i>
            ${this.btn("Thickness", I.line)}${this.btn("Style", I.dots)}${this.btn("Snap", I.magnet)}${this.more()}
          </div>
          <div class="bar"><i class="grip"></i>
            <button class="trade"><span>BUY</span><svg width="16" height="7"><path d="M1 .5h14" stroke="#000" /><path d="M4 6l4-4 4 4z" fill="#008400" /></svg></button>
            <button class="trade"><svg width="16" height="7"><path d="M1 6.500h14" stroke="#000" /><path d="M4 0h8L8 5z" fill="red" /></svg><span>SELL</span></button>
            ${this.more()}
          </div>
        </div>
        <div class="work">
          <aside class="side">
            <div class="phead">${this.pin()}</div>
            <div class="tree">
              <div class="nodes">${[0, 1, 2].map(() => html`<svg width="6" height="6"><path d="M6 0v6H0z" fill="#333" /></svg>`)}</div>
              <div class="vscroll">${this.tri("u", "#444", 7)}<i class="thumb"></i>${this.tri("d", "#444", 7)}</div>
            </div>
            <div class="hscroll">${this.tri("l", "#333", 8)}${this.tri("r", "#333", 8)}</div>
            <div class="stub"></div>
            <div class="panel2">
              <div class="phead">${this.pin()}</div>
              <div class="ptabs"><button class="on">I.</button><button>N</button></div>
            </div>
          </aside>
          <main class="doc">
            <div class="tabs">
              <button class="tab on">${this.tabIcon()}<span>NIFTY1 (5-minute)</span><svg width="10" height="10"><path d="M1 1l7 7M8 1L1 8" stroke="#6b5a33" stroke-width="1.500" /></svg></button>
              <button class="tab">${this.tabIcon()}<span>NIFTY1 (5-minute)</span></button>
              <button class="tab" aria-label="New tab"><svg width="12" height="12"><path d="M4 1h4v3h3v4H8v3H4V8H1V4h3z" fill="none" stroke="#8792a8" /></svg></button>
              <div class="arrows">
                <svg width="6" height="10"><path d="M5 1v8L1 5z" fill="none" stroke="#d0d8e6" /></svg>
                <svg width="6" height="10"><path d="M1 1v8l4-4z" fill="none" stroke="#d0d8e6" /></svg>
                <svg width="10" height="10"><path d="M1 5h8L5 9z" fill="#d0d8e6" /></svg>
              </div>
            </div>
            <section class="frame">
              <div class="chart">
                <svg viewBox=${vb} preserveAspectRatio="xMinYMin meet" shape-rendering="crispEdges">${this.bands()}</svg>
                <div class="orders"><button class="buy">Buy</button><button class="sell">Sell</button><button class="short">Short</button><button class="cover">Cover</button></div>
                <div class="live">Ami Trading Live : ON</div>
                <svg viewBox=${vb} preserveAspectRatio="xMinYMin meet" shape-rendering="crispEdges">${this.plot()}</svg>
                <div class="legend"><p>www.realsenseindia.com -9142227173 - NIFTY1 - <b>5-minute</b> - 12/06/2015 10:54:59 -</p><p>Open-7972 High-7975.7 Low-7967.1 Close-7968 Vol= 74,600.000</p></div>
                <div class="tip price">8055.246</div>
                <div class="tip time">11/06/2015 09:34:59</div>
              </div>
              <div class="sheets">
                ${[["First", "M4.500 2v9M12 2v9L6 6.500z", "#777"], ["Previous", "M11 2v9L5 6.500z", "#777"], ["Next", "M5 2v9l6-4.500z", "#000"], ["Last", "M4 2v9l6-4.500zM11.500 2v9", "#000"]].map(
                  ([l, d, c]) => html`<button class="nav" aria-label=${l}><svg width="15" height="13"><path d=${d} fill=${c} stroke=${c} /></svg></button>`)}
                ${[1, 2, 4, 3, 5, 6, 7].map((n) => html`<button class="sheet"><svg width="60" height="17"><path d="M1 0l6 15.500h44L57 0z" fill="#f4f4f4" stroke="#999" /></svg><span>Sheet ${n}</span></button>`)}
                <button class="cur"><svg width="64" height="17"><path d="M-1 0h65l-7 16H5z" fill="#000" /></svg><span>Sheet 8</span></button>
                <button class="lock" aria-label="Lock"><svg width="16" height="15"><path d="M4 7h8v5H4z" /><path d="M5.500 7V5q2-3 4 0" fill="none" stroke="#000" stroke-width="1.500" /></svg></button>
                <button class="lock">▴S</button><button class="lock">▴I</button>
                <div class="track">${this.tri("l", "#333", 8)}<i class="hthumb"></i><span class="end">${this.tri("r", "#333", 8)}</span></div>
              </div>
            </section>
          </main>
          <aside class="dock">
            <div class="vbar"><i class="hgrip"></i>
              ${this.btn("Zoom in", R.plus)}${this.btn("Zoom out", R.minus)}
              ${["i", "h", "d", "w", "m"].map((c) => html`<button>${c}</button>`)}
              <button class="tail" aria-label="More tools">${this.tri("r", "#1b293e", 7)}</button>
            </div>
            <div class="vbar"><i class="hgrip"></i>
              ${Object.entries(R).slice(2).map(([k, v]) => this.btn(k, v))}
              <button class="tail" aria-label="More lines">${this.tri("r", "#1b293e", 7)}</button>
            </div>
          </aside>
        </div>
        <footer class="status">
          <span>For Help, press F1</span><span>X: 11/06/2015 09:34:59</span><span>Y: 8055.246</span><span>NYSE, Group 0, Services, Advertising</span><span>FXRTDATA</span><span class="blank"></span><span class="mem">3900M</span><span class="caps-key">CAP</span>
        </footer>
        <div class="task"><i></i><i></i><i></i><i></i><i></i></div>
        <section class="dialog" role="dialog" aria-label="Properties">
          <h2>Properties of: mySplMa 1</h2>
          <div class="inner">
            <div class="dtabs"><button class="on">Parameters</button><button>Axes &amp; Grid</button></div>
            <div class="pane">
              <div class="rows"><table><tbody>
                ${[["Amibroker Tr...", "Yes"], ["Show Buttons", "Yes"], ["Trade On", "SignalBar"], ["Permitted Tr...", "Long+Short"], ["Decimal Digits", "2"], ["Show on Chart", "No"]].map(
                  ([k, v]) => html`<tr><th scope="row">${k}</th><td>${v}</td></tr>`)}
              </tbody></table></div>
              <div class="vscroll">${this.tri("u", "#444", 7)}<i class="thumb"></i>${this.tri("d", "#444", 7)}</div>
            </div>
            <div class="acts"><button>Reset all</button><button class="ok">OK</button></div>
            <svg class="size" viewBox="0 0 11 11"><path d="M0 11L11 0M4 11l7-7M8 11l3-3" stroke="#888" /></svg>
          </div>
        </section>
      </div>`;
  }
}
